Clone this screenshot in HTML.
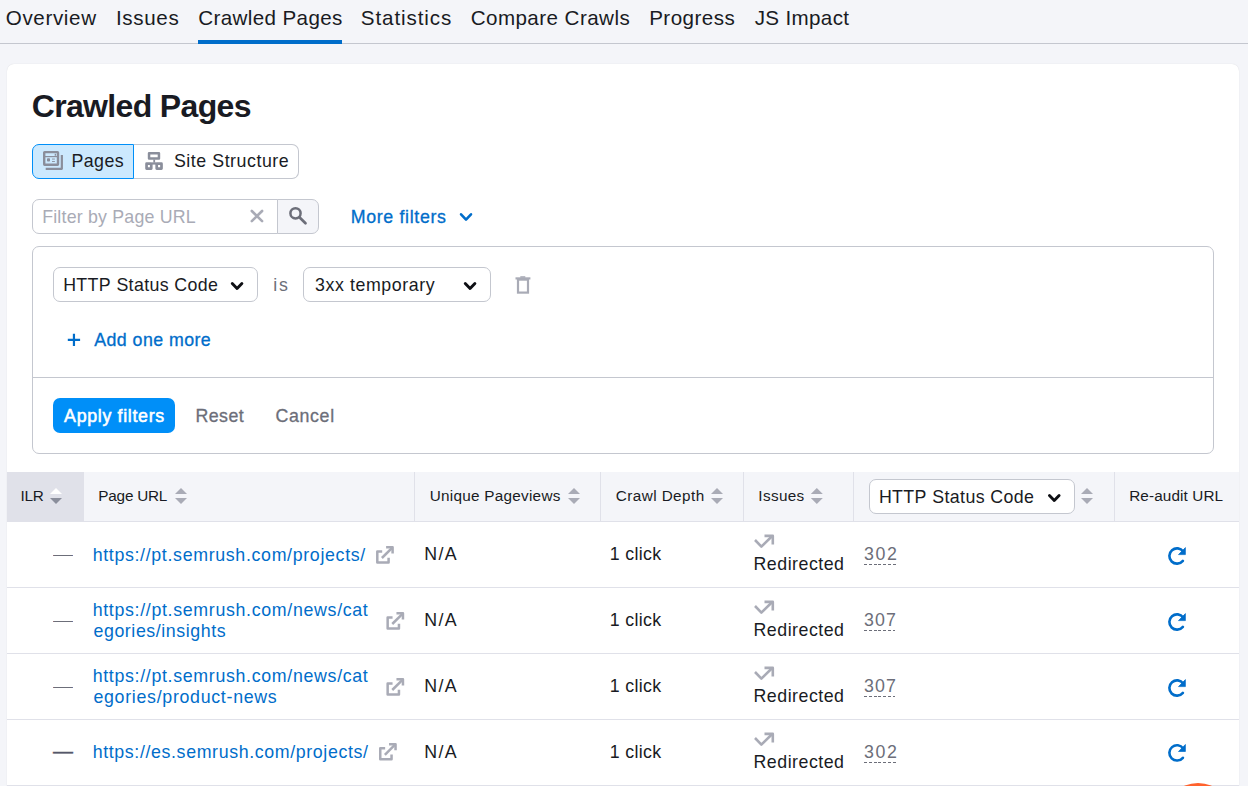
<!DOCTYPE html>
<html lang="en"><head><meta charset="utf-8"><title>Crawled Pages</title>
<style>
html,body{margin:0;padding:0}
body{width:1248px;height:786px;overflow:hidden;position:relative;background:#f4f5f9;font-family:"Liberation Sans",sans-serif;font-kerning:none;-webkit-font-smoothing:antialiased}
.t{position:absolute;white-space:pre;}
.b{position:absolute;box-sizing:border-box;display:block}
</style></head><body>
<div class="b" style="left:0px;top:43px;width:1248px;height:1px;background:#c4c7cf"></div>
<div class="b" style="left:198px;top:40px;width:144px;height:4px;background:#006dca"></div>
<span class="t" style="left:5.78px;top:6px;font-size:20.6px;line-height:23px;letter-spacing:0.637px;color:#191b23;font-weight:400;">Overview</span>
<span class="t" style="left:116.02px;top:6px;font-size:20.6px;line-height:23px;letter-spacing:0.629px;color:#191b23;font-weight:400;">Issues</span>
<span class="t" style="left:198.20px;top:6px;font-size:20.6px;line-height:23px;letter-spacing:0.375px;color:#191b23;font-weight:400;">Crawled Pages</span>
<span class="t" style="left:360.78px;top:6px;font-size:20.6px;line-height:23px;letter-spacing:0.900px;color:#191b23;font-weight:400;">Statistics</span>
<span class="t" style="left:470.68px;top:6px;font-size:20.6px;line-height:23px;letter-spacing:0.439px;color:#191b23;font-weight:400;">Compare Crawls</span>
<span class="t" style="left:649.16px;top:6px;font-size:20.6px;line-height:23px;letter-spacing:0.455px;color:#191b23;font-weight:400;">Progress</span>
<span class="t" style="left:754.72px;top:6px;font-size:20.6px;line-height:23px;letter-spacing:0.339px;color:#191b23;font-weight:400;">JS Impact</span>
<div class="b" style="left:7px;top:64px;width:1232px;height:736px;background:#fff;border-radius:7px;box-shadow:0 0 1px 0 rgba(25,27,35,.16)"></div>
<span class="t" style="left:31.68px;top:88px;font-size:32px;line-height:36px;letter-spacing:-0.647px;color:#191b23;font-weight:700;">Crawled Pages</span>
<div class="b" style="left:134px;top:144px;width:165px;height:35px;border:1px solid #c4c7cf;border-left:none;border-radius:0 7px 7px 0;background:#fff"></div>
<div class="b" style="left:32px;top:144px;width:102px;height:35px;border:1px solid #008ff8;border-radius:7px 0 0 7px;background:#cce9fe"></div>
<span class="t" style="left:71.40px;top:151px;font-size:17.8px;line-height:20px;letter-spacing:0.484px;color:#191b23;font-weight:400;">Pages</span>
<span class="t" style="left:173.96px;top:151px;font-size:17.8px;line-height:20px;letter-spacing:0.540px;color:#191b23;font-weight:400;">Site Structure</span>
<div class="b" style="left:32px;top:199px;width:246px;height:35px;border:1px solid #c4c7cf;border-radius:7px 0 0 7px;background:#fff"></div>
<div class="b" style="left:277px;top:199px;width:42px;height:35px;border:1px solid #c4c7cf;border-radius:0 7px 7px 0;background:#f4f5f9"></div>
<span class="t" style="left:42.16px;top:207px;font-size:17.8px;line-height:20px;letter-spacing:0.193px;color:#a9abb6;font-weight:400;">Filter by Page URL</span>
<span class="t" style="left:350.70px;top:207px;font-size:17.8px;line-height:20px;letter-spacing:0.665px;color:#006dca;font-weight:400;-webkit-text-stroke-width:.3px;">More filters</span>
<div class="b" style="left:32px;top:246px;width:1182px;height:208px;border:1px solid #c4c7cf;border-radius:7px;background:#fff"></div>
<div class="b" style="left:33px;top:377px;width:1180px;height:1px;background:#c4c7cf"></div>
<div class="b" style="left:53px;top:267px;width:205px;height:35px;border:1px solid #c4c7cf;border-radius:7px;background:#fff"></div>
<div class="b" style="left:303px;top:267px;width:188px;height:35px;border:1px solid #c4c7cf;border-radius:7px;background:#fff"></div>
<span class="t" style="left:63.16px;top:275px;font-size:17.8px;line-height:20px;letter-spacing:0.371px;color:#191b23;font-weight:400;">HTTP Status Code</span>
<span class="t" style="left:273.20px;top:275px;font-size:17.8px;line-height:20px;letter-spacing:1.979px;color:#6c6e79;font-weight:400;">is</span>
<span class="t" style="left:314.96px;top:275px;font-size:17.8px;line-height:20px;letter-spacing:0.586px;color:#191b23;font-weight:400;">3xx temporary</span>
<span class="t" style="left:94.24px;top:330px;font-size:17.8px;line-height:20px;letter-spacing:0.439px;color:#006dca;font-weight:400;-webkit-text-stroke-width:.3px;">Add one more</span>
<div class="b" style="left:53px;top:398px;width:122px;height:35px;background:#008ff8;border-radius:7px"></div>
<span class="t" style="left:64.10px;top:406px;font-size:17.8px;line-height:20px;letter-spacing:0.680px;color:#fff;font-weight:400;-webkit-text-stroke-width:.55px;">Apply filters</span>
<span class="t" style="left:195.40px;top:406px;font-size:17.8px;line-height:20px;letter-spacing:0.464px;color:#6c6e79;font-weight:400;-webkit-text-stroke-width:.3px;">Reset</span>
<span class="t" style="left:275.44px;top:406px;font-size:17.8px;line-height:20px;letter-spacing:0.668px;color:#6c6e79;font-weight:400;-webkit-text-stroke-width:.3px;">Cancel</span>
<div class="b" style="left:7px;top:472px;width:1232px;height:50px;background:#f4f5f9"></div>
<div class="b" style="left:7px;top:472px;width:77px;height:50px;background:#e0e1e9"></div>
<div class="b" style="left:84px;top:521px;width:1155px;height:1px;background:#e0e1e9"></div>
<div class="b" style="left:414px;top:472px;width:1px;height:50px;background:#e0e1e9"></div>
<div class="b" style="left:600px;top:472px;width:1px;height:50px;background:#e0e1e9"></div>
<div class="b" style="left:743px;top:472px;width:1px;height:50px;background:#e0e1e9"></div>
<div class="b" style="left:853px;top:472px;width:1px;height:50px;background:#e0e1e9"></div>
<div class="b" style="left:1114px;top:472px;width:1px;height:50px;background:#e0e1e9"></div>
<span class="t" style="left:20.50px;top:487px;font-size:15.3px;line-height:17px;letter-spacing:-0.246px;color:#191b23;font-weight:400;">ILR</span>
<span class="t" style="left:98.30px;top:487px;font-size:15.3px;line-height:17px;letter-spacing:-0.213px;color:#191b23;font-weight:400;">Page URL</span>
<span class="t" style="left:429.68px;top:487px;font-size:15.3px;line-height:17px;letter-spacing:0.265px;color:#191b23;font-weight:400;">Unique Pageviews</span>
<span class="t" style="left:615.82px;top:487px;font-size:15.3px;line-height:17px;letter-spacing:0.417px;color:#191b23;font-weight:400;">Crawl Depth</span>
<span class="t" style="left:758.30px;top:487px;font-size:15.3px;line-height:17px;letter-spacing:0.353px;color:#191b23;font-weight:400;">Issues</span>
<span class="t" style="left:1129.16px;top:487px;font-size:15.3px;line-height:17px;letter-spacing:0.118px;color:#191b23;font-weight:400;">Re-audit URL</span>
<div class="b" style="left:869px;top:479px;width:206px;height:35px;border:1px solid #c4c7cf;border-radius:7px;background:#fff"></div>
<span class="t" style="left:878.88px;top:487px;font-size:17.8px;line-height:20px;letter-spacing:0.390px;color:#191b23;font-weight:400;">HTTP Status Code</span>
<div class="b" style="left:7px;top:587px;width:1232px;height:1px;background:#e0e1e9"></div>
<span class="t" style="left:53.00px;top:546px;font-size:14px;line-height:16px;letter-spacing:0.000px;color:#6c6e79;font-weight:400;transform:scaleX(1.4286);transform-origin:0 0;">—</span>
<span class="t" style="left:92.64px;top:545px;font-size:17.8px;line-height:20px;letter-spacing:0.665px;color:#006dca;font-weight:400;">https://pt.semrush.com/projects/</span>
<span class="t" style="left:424.16px;top:544px;font-size:17.8px;line-height:20px;letter-spacing:1.409px;color:#191b23;font-weight:400;">N/A</span>
<span class="t" style="left:609.68px;top:544px;font-size:17.8px;line-height:20px;letter-spacing:0.353px;color:#191b23;font-weight:400;">1 click</span>
<span class="t" style="left:753.54px;top:554px;font-size:17.8px;line-height:20px;letter-spacing:0.497px;color:#191b23;font-weight:400;">Redirected</span>
<span class="t" style="left:863.96px;top:544px;font-size:17.8px;line-height:20px;letter-spacing:1.649px;color:#6c6e79;font-weight:400;">302</span>
<div class="b" style="left:864px;top:564px;width:32px;height:1px;background:repeating-linear-gradient(90deg,#6c6e79 0,#6c6e79 3px,transparent 3px,transparent 4.83px)"></div>
<div class="b" style="left:7px;top:653px;width:1232px;height:1px;background:#e0e1e9"></div>
<span class="t" style="left:53.00px;top:612px;font-size:14px;line-height:16px;letter-spacing:0.000px;color:#6c6e79;font-weight:400;transform:scaleX(1.4286);transform-origin:0 0;">—</span>
<span class="t" style="left:92.64px;top:600px;font-size:17.8px;line-height:20px;letter-spacing:0.674px;color:#006dca;font-weight:400;">https://pt.semrush.com/news/cat</span>
<span class="t" style="left:93.44px;top:621px;font-size:17.8px;line-height:20px;letter-spacing:0.580px;color:#006dca;font-weight:400;">egories/insights</span>
<span class="t" style="left:424.16px;top:610px;font-size:17.8px;line-height:20px;letter-spacing:1.409px;color:#191b23;font-weight:400;">N/A</span>
<span class="t" style="left:609.68px;top:610px;font-size:17.8px;line-height:20px;letter-spacing:0.353px;color:#191b23;font-weight:400;">1 click</span>
<span class="t" style="left:753.54px;top:620px;font-size:17.8px;line-height:20px;letter-spacing:0.497px;color:#191b23;font-weight:400;">Redirected</span>
<span class="t" style="left:863.96px;top:610px;font-size:17.8px;line-height:20px;letter-spacing:1.079px;color:#6c6e79;font-weight:400;">307</span>
<div class="b" style="left:864px;top:630px;width:31px;height:1px;background:repeating-linear-gradient(90deg,#6c6e79 0,#6c6e79 3px,transparent 3px,transparent 4.83px)"></div>
<div class="b" style="left:7px;top:719px;width:1232px;height:1px;background:#e0e1e9"></div>
<span class="t" style="left:53.00px;top:678px;font-size:14px;line-height:16px;letter-spacing:0.000px;color:#6c6e79;font-weight:400;transform:scaleX(1.4286);transform-origin:0 0;">—</span>
<span class="t" style="left:92.64px;top:666px;font-size:17.8px;line-height:20px;letter-spacing:0.674px;color:#006dca;font-weight:400;">https://pt.semrush.com/news/cat</span>
<span class="t" style="left:93.44px;top:687px;font-size:17.8px;line-height:20px;letter-spacing:0.700px;color:#006dca;font-weight:400;">egories/product-news</span>
<span class="t" style="left:424.16px;top:676px;font-size:17.8px;line-height:20px;letter-spacing:1.409px;color:#191b23;font-weight:400;">N/A</span>
<span class="t" style="left:609.68px;top:676px;font-size:17.8px;line-height:20px;letter-spacing:0.353px;color:#191b23;font-weight:400;">1 click</span>
<span class="t" style="left:753.54px;top:686px;font-size:17.8px;line-height:20px;letter-spacing:0.497px;color:#191b23;font-weight:400;">Redirected</span>
<span class="t" style="left:863.96px;top:676px;font-size:17.8px;line-height:20px;letter-spacing:1.079px;color:#6c6e79;font-weight:400;">307</span>
<div class="b" style="left:864px;top:696px;width:31px;height:1px;background:repeating-linear-gradient(90deg,#6c6e79 0,#6c6e79 3px,transparent 3px,transparent 4.83px)"></div>
<div class="b" style="left:7px;top:785px;width:1232px;height:1px;background:#e0e1e9"></div>
<span class="t" style="left:53.00px;top:740px;font-size:20px;line-height:22px;letter-spacing:0.000px;color:#55576a;font-weight:400;-webkit-text-stroke-width:.35px;">—</span>
<span class="t" style="left:92.64px;top:742px;font-size:17.8px;line-height:20px;letter-spacing:0.627px;color:#006dca;font-weight:400;">https://es.semrush.com/projects/</span>
<span class="t" style="left:424.16px;top:742px;font-size:17.8px;line-height:20px;letter-spacing:1.409px;color:#191b23;font-weight:400;">N/A</span>
<span class="t" style="left:609.68px;top:742px;font-size:17.8px;line-height:20px;letter-spacing:0.353px;color:#191b23;font-weight:400;">1 click</span>
<span class="t" style="left:753.54px;top:752px;font-size:17.8px;line-height:20px;letter-spacing:0.497px;color:#191b23;font-weight:400;">Redirected</span>
<span class="t" style="left:863.96px;top:742px;font-size:17.8px;line-height:20px;letter-spacing:1.649px;color:#6c6e79;font-weight:400;">302</span>
<div class="b" style="left:864px;top:762px;width:32px;height:1px;background:repeating-linear-gradient(90deg,#6c6e79 0,#6c6e79 3px,transparent 3px,transparent 4.83px)"></div>
<svg class="b" style="left:0;top:0" width="1248" height="786" viewBox="0 0 1248 786" fill="none"><g stroke="#8a8e9b" fill="none"><rect x="44.2" y="152.1" width="13.8" height="12.6" rx=".4" stroke-width="2.4"/><path d="M61.85 155v13.8H45.7" stroke-width="2.2" stroke-linejoin="round"/><path d="M44.5 156.6h13.5" stroke-width="1.2"/><path d="M55.4 153.8v1.9" stroke-width="1.4"/></g><rect x="47" y="158.2" width="3" height="3.4" rx=".8" fill="#8a8e9b"/><rect x="52" y="158.6" width="2.9" height=".9" fill="#8a8e9b"/><rect x="52" y="161" width="2.9" height=".9" fill="#8a8e9b"/><g stroke="#8a8e9b" fill="none" stroke-linejoin="round"><rect x="149.05" y="153.3" width="9.9" height="5.2" stroke-width="2.5"/><rect x="146.55" y="163.7" width="4.7" height="4.9" stroke-width="2.7"/><rect x="156.7" y="163.7" width="4.8" height="4.9" stroke-width="2.7"/></g><rect x="153.3" y="159.5" width="1.8" height="3.2" fill="#8a8e9b"/><rect x="152" y="162.4" width="4" height="2.2" fill="#8a8e9b"/><path d="M251.8 211l10.3 10.1M262.1 211l-10.3 10.1" stroke="#a9abb6" stroke-width="2.6" stroke-linecap="round"/><circle cx="295.5" cy="213.3" r="5.1" stroke="#6c6e79" stroke-width="2.5"/><path d="M299.4 217.3l6.1 6" stroke="#6c6e79" stroke-width="2.7" stroke-linecap="round"/><path d="M461.05 214.30l4.97 5.30l4.97 -5.30" stroke="#006dca" stroke-width="2.6" stroke-linecap="round" stroke-linejoin="round"/><path d="M465.25 283.45l4.82 5.00l4.82 -5.00" stroke="#0e0f14" stroke-width="2.9" stroke-linecap="round" stroke-linejoin="round"/><path d="M232.25 283.45l4.82 5.00l4.82 -5.00" stroke="#0e0f14" stroke-width="2.9" stroke-linecap="round" stroke-linejoin="round"/><path d="M1049.45 495.45l4.82 5.00l4.82 -5.00" stroke="#0e0f14" stroke-width="2.9" stroke-linecap="round" stroke-linejoin="round"/><path d="M515.5 278.4h14.9" stroke="#a9abb6" stroke-width="2.2"/><path d="M520.3 277h5" stroke="#a9abb6" stroke-width="1.6"/><rect x="518" y="279.6" width="10" height="13" stroke="#a9abb6" stroke-width="2.2"/><path d="M67.8 339.9h12.3M73.95 333.7v12.3" stroke="#006dca" stroke-width="2.2"/><path d="M50 493.9l6-6l6 6z" fill="#ffffff"/><path d="M50 498l6 6l6-6z" fill="#8a8e9b"/><path d="M175 493.9l6-6l6 6z" fill="#a9abb6"/><path d="M175 498l6 6l6-6z" fill="#a9abb6"/><path d="M568 493.9l6-6l6 6z" fill="#a9abb6"/><path d="M568 498l6 6l6-6z" fill="#a9abb6"/><path d="M711 493.9l6-6l6 6z" fill="#a9abb6"/><path d="M711 498l6 6l6-6z" fill="#a9abb6"/><path d="M810.8 493.9l6-6l6 6z" fill="#a9abb6"/><path d="M810.8 498l6 6l6-6z" fill="#a9abb6"/><path d="M1081 493.9l6-6l6 6z" fill="#a9abb6"/><path d="M1081 498l6 6l6-6z" fill="#a9abb6"/><g transform="translate(0.00 0)" stroke="#a9abb6" stroke-width="2.5" fill="none" stroke-linejoin="round"><path d="M382.2 551.45h-4.9v11h11.3v-4.7"/><path d="M381.9 558l10.2-10.2"/><path d="M386.1 547.35h6.5v6.1"/></g><g transform="translate(0 0)" stroke="#a9abb6" stroke-width="2.6" fill="none" stroke-linejoin="round"><path d="M755 540l6.4 6.6l10.8-10.6"/><path d="M764.5 535.9h8.3v8.5"/></g><g transform="translate(0 0)"><path d="M1183.2 551.5A7.65 7.65 0 1 0 1182.9 560.9" stroke="#006dca" stroke-width="2.6" stroke-linecap="round" fill="none"/><path d="M1185.4 547.6v7h-6.9z" fill="#006dca" stroke="#006dca" stroke-width=".7" stroke-linejoin="round"/></g><g transform="translate(10.35 66)" stroke="#a9abb6" stroke-width="2.5" fill="none" stroke-linejoin="round"><path d="M382.2 551.45h-4.9v11h11.3v-4.7"/><path d="M381.9 558l10.2-10.2"/><path d="M386.1 547.35h6.5v6.1"/></g><g transform="translate(0 66)" stroke="#a9abb6" stroke-width="2.6" fill="none" stroke-linejoin="round"><path d="M755 540l6.4 6.6l10.8-10.6"/><path d="M764.5 535.9h8.3v8.5"/></g><g transform="translate(0 66)"><path d="M1183.2 551.5A7.65 7.65 0 1 0 1182.9 560.9" stroke="#006dca" stroke-width="2.6" stroke-linecap="round" fill="none"/><path d="M1185.4 547.6v7h-6.9z" fill="#006dca" stroke="#006dca" stroke-width=".7" stroke-linejoin="round"/></g><g transform="translate(10.35 132)" stroke="#a9abb6" stroke-width="2.5" fill="none" stroke-linejoin="round"><path d="M382.2 551.45h-4.9v11h11.3v-4.7"/><path d="M381.9 558l10.2-10.2"/><path d="M386.1 547.35h6.5v6.1"/></g><g transform="translate(0 132)" stroke="#a9abb6" stroke-width="2.6" fill="none" stroke-linejoin="round"><path d="M755 540l6.4 6.6l10.8-10.6"/><path d="M764.5 535.9h8.3v8.5"/></g><g transform="translate(0 132)"><path d="M1183.2 551.5A7.65 7.65 0 1 0 1182.9 560.9" stroke="#006dca" stroke-width="2.6" stroke-linecap="round" fill="none"/><path d="M1185.4 547.6v7h-6.9z" fill="#006dca" stroke="#006dca" stroke-width=".7" stroke-linejoin="round"/></g><g transform="translate(2.95 196.8)" stroke="#a9abb6" stroke-width="2.5" fill="none" stroke-linejoin="round"><path d="M382.2 551.45h-4.9v11h11.3v-4.7"/><path d="M381.9 558l10.2-10.2"/><path d="M386.1 547.35h6.5v6.1"/></g><g transform="translate(0 198)" stroke="#a9abb6" stroke-width="2.6" fill="none" stroke-linejoin="round"><path d="M755 540l6.4 6.6l10.8-10.6"/><path d="M764.5 535.9h8.3v8.5"/></g><g transform="translate(0 196.9)"><path d="M1183.2 551.5A7.65 7.65 0 1 0 1182.9 560.9" stroke="#006dca" stroke-width="2.6" stroke-linecap="round" fill="none"/><path d="M1185.4 547.6v7h-6.9z" fill="#006dca" stroke="#006dca" stroke-width=".7" stroke-linejoin="round"/></g></svg>
<div class="b" style="left:1163.5px;top:782.8px;width:68.0px;height:68.0px;background:#ff622d;border-radius:50%"></div>

</body></html>
